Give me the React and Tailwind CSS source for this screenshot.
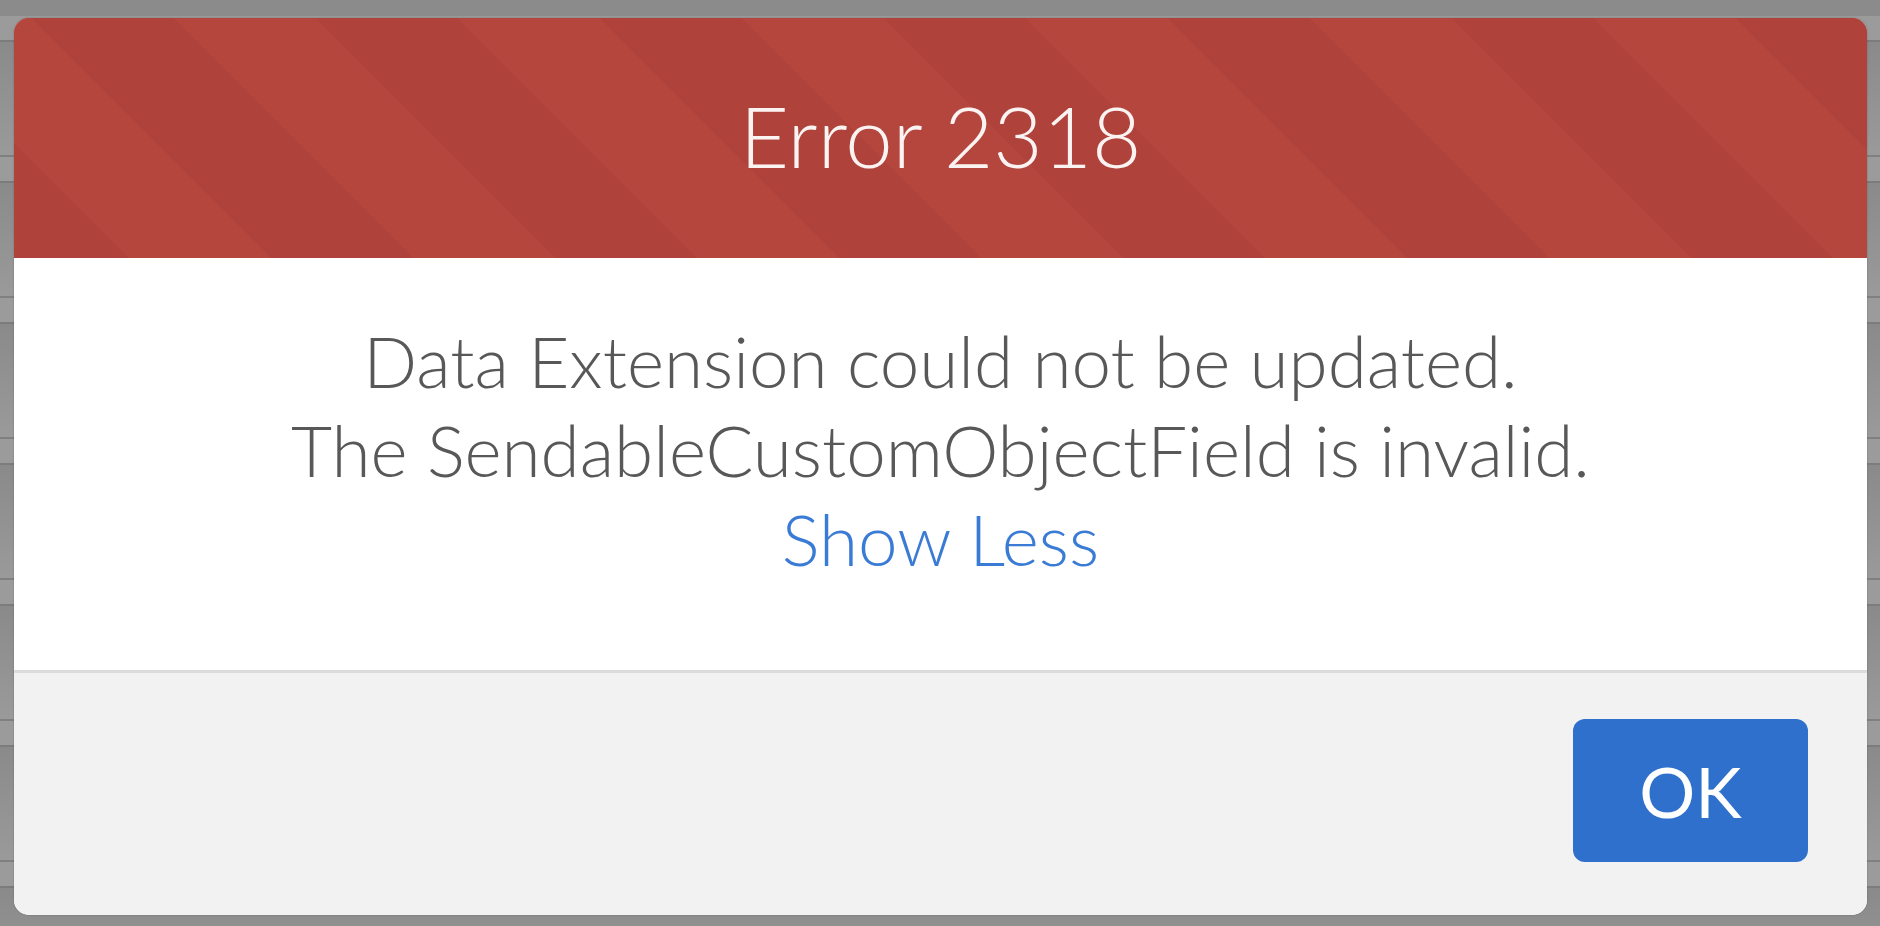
import React from 'react';

// Error prompt modal over a dimmed page
const ErrorPrompt = ({ code, lines, onToggle, onOk }) => {
    return (
        <div className="w-[1853px] h-[897px] rounded-[15px] overflow-hidden flex flex-col bg-white shadow-[0_0_2px_rgba(0,0,0,0.25)]">
            {/* --- Header --- */}
            <div className="h-[240px] shrink-0 flex items-center justify-center pb-[6px] bg-[#b4463e] bg-[linear-gradient(45deg,#af423a_25%,#b4463e_25%,#b4463e_50%,#af423a_50%,#af423a_75%,#b4463e_75%,#b4463e)] bg-[length:284px_284px] bg-[position:18px_0px]">
                <h2 className="text-[85px] leading-[85px] font-light text-[#fbf3f2]">Error {code}</h2>
            </div>

            {/* --- Body --- */}
            <div className="h-[412px] shrink-0 pt-[58px] text-center text-[71px] leading-[89px] font-light text-[#585858]">
                {lines.map((line) => (
                    <p key={line}>{line}</p>
                ))}
                <button type="button" onClick={onToggle} className="text-[#3a7bd5] font-light">
                    Show Less
                </button>
            </div>

            {/* --- Footer --- */}
            <div className="flex-1 border-t-[3px] border-[#dddbda] bg-[#f3f2f2] flex justify-end items-start pt-[46px] pr-[59px]">
                <button
                    type="button"
                    onClick={onOk}
                    className="w-[235px] h-[143px] rounded-[12px] bg-[#2f70cc] text-white text-[70px] leading-none font-normal flex items-center justify-center"
                >
                    OK
                </button>
            </div>
        </div>
    );
};

export default function App() {
    return (
        <div
            className="w-full h-[926px] overflow-hidden pt-[18px] pl-[14px] [font-family:Lato,'Noto_Sans',sans-serif] [background:linear-gradient(#8b8b8b,#8b8b8b)_0_0/100%_16px_no-repeat,linear-gradient(180deg,#9b9b9b_0px,#9b9b9b_24px,#7c7c7c_24px,#7c7c7c_26px,#8a8a8a_26px,#9a9a9a_139px,#808080_139px,#808080_141px)_0_16px/100%_141px_repeat-y]"
        >
            <ErrorPrompt
                code="2318"
                lines={[
                    'Data Extension could not be updated.',
                    'The SendableCustomObjectField is invalid.',
                ]}
                onToggle={() => {}}
                onOk={() => {}}
            />
        </div>
    );
}
